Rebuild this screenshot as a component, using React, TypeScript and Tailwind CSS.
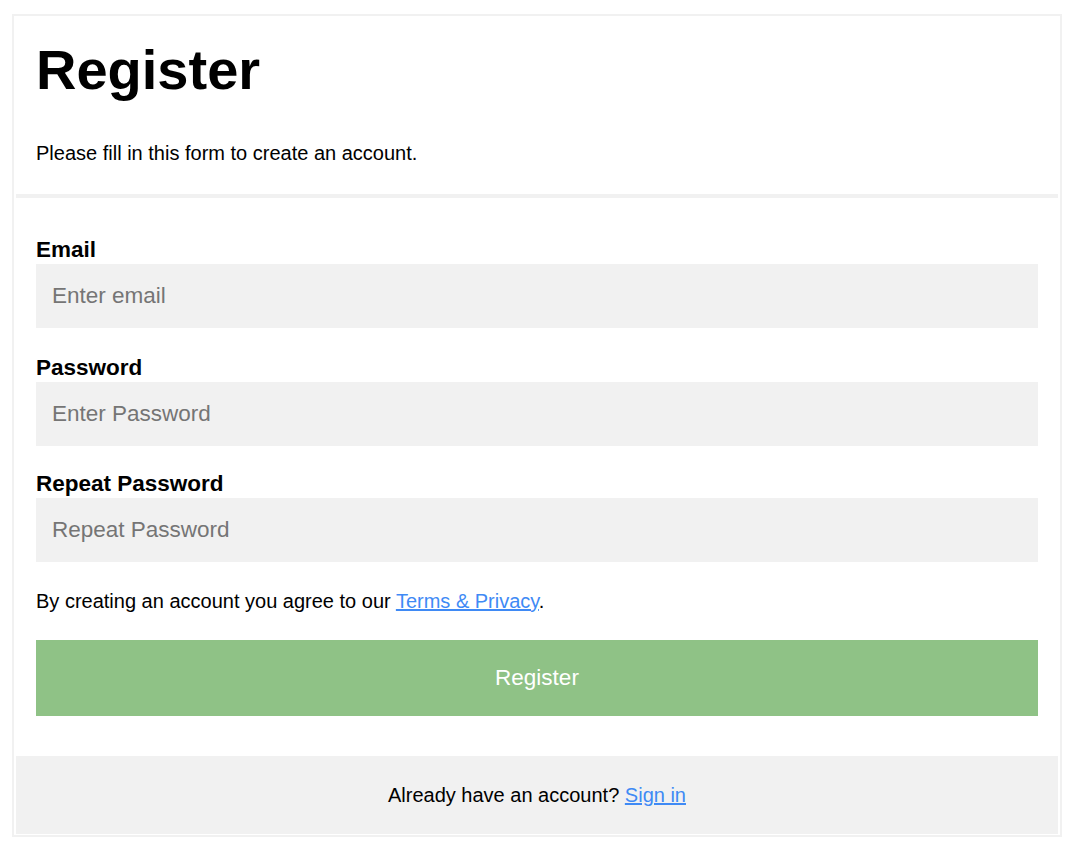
import React from 'react';

export default function App() {
  return (
    <div className="min-h-screen bg-white font-['Liberation_Sans',Arial,sans-serif] text-black">
      <div className="ml-[12px] mt-[14px] w-[1050px] border-2 border-[#f1f1f1] px-[2px] pt-[2px] pb-[1px]">
        <form onSubmit={(e) => e.preventDefault()}>
          <div className="px-[20px]">
            <h1 className="mt-[20px] text-[56px] leading-[64px] font-bold">Register</h1>
            <p className="mt-[40px] text-[20px] leading-[23px]">Please fill in this form to create an account.</p>
          </div>

          <hr className="mt-[29px] h-[4px] border-0 bg-[#f1f1f1]" />

          <div className="px-[20px]">
            <label htmlFor="email" className="mt-[38px] block text-[22.5px] leading-[28px] font-bold">
              Email
            </label>
            <input
              id="email"
              type="text"
              placeholder="Enter email"
              className="block h-[64px] w-full bg-[#f1f1f1] px-[16px] text-[22.5px] outline-none placeholder:text-[#757575]"
            />

            <label htmlFor="psw" className="mt-[26px] block text-[22.5px] leading-[28px] font-bold">
              Password
            </label>
            <input
              id="psw"
              type="password"
              placeholder="Enter Password"
              className="block h-[64px] w-full bg-[#f1f1f1] px-[16px] text-[22.5px] outline-none placeholder:text-[#757575]"
            />

            <label htmlFor="psw-repeat" className="mt-[24px] block text-[22.5px] leading-[28px] font-bold">
              Repeat Password
            </label>
            <input
              id="psw-repeat"
              type="password"
              placeholder="Repeat Password"
              className="block h-[64px] w-full bg-[#f1f1f1] px-[16px] text-[22.5px] outline-none placeholder:text-[#757575]"
            />

            <p className="mt-[28px] text-[20px] leading-[23px]">
              By creating an account you agree to our{' '}
              <a href="#" className="text-[#3f8af5] underline">
                Terms &amp; Privacy
              </a>
              .
            </p>

            <button
              type="submit"
              className="mt-[27px] block h-[76px] w-full bg-[#8fc286] text-[22.5px] text-white"
            >
              Register
            </button>
          </div>

          <div className="mt-[40px] flex h-[78px] items-center justify-center bg-[#f1f1f1] text-[20px]">
            <p>
              Already have an account?{' '}
              <a href="#" className="text-[#3f8af5] underline">
                Sign in
              </a>
            </p>
          </div>
        </form>
      </div>
    </div>
  );
}
